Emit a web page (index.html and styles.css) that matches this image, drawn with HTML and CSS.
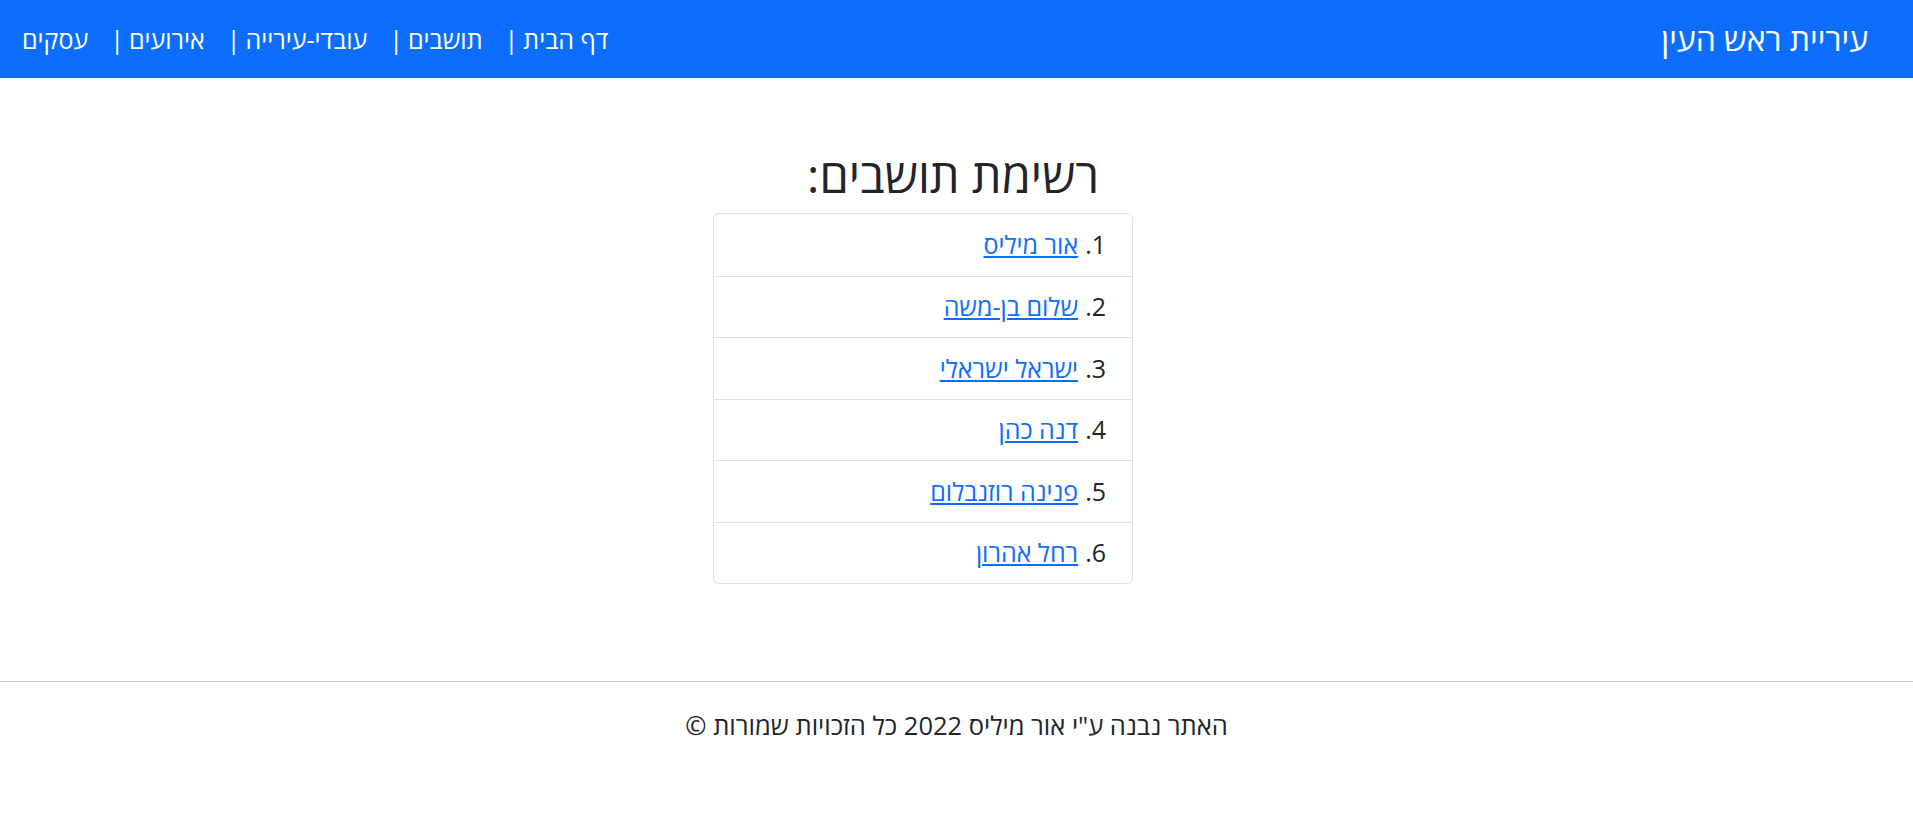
FILE: index.html
```html
<!DOCTYPE html>
<html lang="he" dir="rtl">
<head>
<meta charset="utf-8">
<title>עיריית ראש העין</title>
<link rel="stylesheet" href="styles.css">
</head>
<body>
<nav class="navbar">
  <a class="brand" href="#">עיריית ראש העין</a>
  <div class="nav-links">
    <a href="#">דף הבית</a><span class="sep">|</span>
    <a href="#">תושבים</a><span class="sep">|</span>
    <a href="#">עובדי-עירייה</a><span class="sep">|</span>
    <a href="#">אירועים</a><span class="sep">|</span>
    <a href="#">עסקים</a>
  </div>
</nav>
<main class="main">
  <h2 class="title">רשימת תושבים:</h2>
  <div class="list-wrap">
    <ul class="list-group">
      <li class="list-item"><span class="num">1.</span> <a href="#">אור מיליס</a></li>
      <li class="list-item"><span class="num">2.</span> <a href="#">שלום בן-משה</a></li>
      <li class="list-item"><span class="num">3.</span> <a href="#">ישראל ישראלי</a></li>
      <li class="list-item"><span class="num">4.</span> <a href="#">דנה כהן</a></li>
      <li class="list-item"><span class="num">5.</span> <a href="#">פנינה רוזנבלום</a></li>
      <li class="list-item"><span class="num">6.</span> <a href="#">רחל אהרון</a></li>
    </ul>
  </div>
</main>
<footer class="footer">
  <hr class="rule">
  <p class="copy">האתר נבנה ע"י אור מיליס 2022 כל הזכויות שמורות ©</p>
</footer>
</body>
</html>
```
FILE: styles.css
```css
* { box-sizing: border-box; }
html, body {
  margin: 0;
  padding: 0;
  background: #fff;
}
body {
  font-family: "Open Sans", "Liberation Sans", sans-serif;
  color: #212529;
  font-size: 25px;
  line-height: 1.4;
  direction: rtl;
}
.navbar {
  height: 78px;
  background: #0d6efd;
  display: flex;
  align-items: center;
  justify-content: space-between;
  padding: 0 45px 0 22px;
}
.brand {
  color: #fff;
  text-decoration: none;
  font-size: 32px;
  line-height: 1;
}
.nav-links {
  display: flex;
  align-items: center;
  font-size: 25px;
}
.nav-links a {
  color: #fff;
  text-decoration: none;
}
.sep {
  color: #fff;
  margin-right: 5px;
  margin-left: 22px;
}
.main {
  padding-top: 68px;
}
.title {
  margin: 0 0 8px;
  padding-right: 7px;
  height: 59px;
  text-align: center;
  font-weight: 500;
  font-size: 47px;
  line-height: 59px;
}
.list-wrap {
  width: 487px;
  margin: 0 auto;
}
.list-group {
  list-style: none;
  margin: 0 auto 0 0;
  padding: 0;
  width: 420px;
  border: 1px solid #dee2e6;
  border-radius: 6px;
}
.list-item {
  height: 61.5px;
  display: flex;
  align-items: center;
  gap: 7px;
  padding: 0 26px;
  border-top: 1px solid #dee2e6;
}
.list-item:first-child { border-top: none; }
.list-item a { color: #0d6efd; text-decoration: underline; }
.footer {
  margin-top: 97px;
}
.rule {
  margin: 0;
  border: 0;
  border-top: 1px solid #ccc;
}
.copy {
  margin: 0;
  padding-top: 26px;
  text-align: center;
  font-size: 25.5px;
}
```
